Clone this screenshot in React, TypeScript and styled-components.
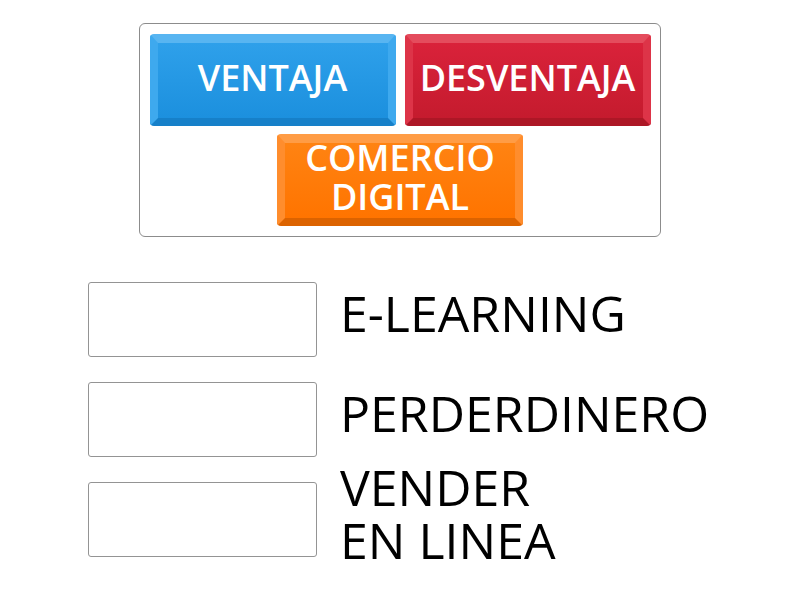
import React from "react";
import styled, { createGlobalStyle } from "styled-components";

const Global = createGlobalStyle`
  html, body { margin: 0; padding: 0; background: #ffffff; }
  body { font-family: "Open Sans", "Liberation Sans", sans-serif; }
`;

type Tone = "blue" | "red" | "orange";

const palette: Record<Tone, { top: string; side: string; bottom: string; faceA: string; faceB: string }> = {
  blue: { top: "#58b5f1", side: "#3ea9ee", bottom: "#1680c9", faceA: "#2ea0ea", faceB: "#1c90de" },
  red: { top: "#e44c5d", side: "#dd3448", bottom: "#ad1726", faceA: "#d9223a", faceB: "#c51b2e" },
  orange: { top: "#ff9c45", side: "#ff8d2d", bottom: "#dc6300", faceA: "#ff8312", faceB: "#ff7400" },
};

const Page = styled.div`
  width: 800px;
  height: 600px;
  display: flex;
  flex-direction: column;
  align-items: center;
  box-sizing: border-box;
  padding-top: 23px;
`;

const Bank = styled.div`
  box-sizing: border-box;
  width: 522px;
  border: 1px solid #8c8c8c;
  border-radius: 6px;
  padding: 10px 9px;
  display: flex;
  flex-wrap: wrap;
  justify-content: center;
  gap: 8px 9px;
`;

const Tile = styled.div<{ $tone: Tone }>`
  box-sizing: border-box;
  width: 246px;
  height: 92px;
  border-radius: 4px;
  border-style: solid;
  border-width: 9px 8px 8px 8px;
  border-top-color: ${(p) => palette[p.$tone].top};
  border-left-color: ${(p) => palette[p.$tone].side};
  border-right-color: ${(p) => palette[p.$tone].side};
  border-bottom-color: ${(p) => palette[p.$tone].bottom};
  background: linear-gradient(${(p) => palette[p.$tone].faceA}, ${(p) => palette[p.$tone].faceB});
  display: flex;
  align-items: center;
  justify-content: center;
  text-align: center;
  color: #ffffff;
  font-family: "Open Sans", "Liberation Sans", sans-serif;
  font-weight: 600;
  font-size: 36px;
  line-height: 39px;
  padding-bottom: 7px;
`;

const List = styled.div`
  width: 800px;
  box-sizing: border-box;
  padding-left: 88px;
  margin-top: 45px;
  display: flex;
  flex-direction: column;
  gap: 25px;
`;

const Row = styled.div`
  display: flex;
  align-items: center;
  gap: 23px;
  height: 75px;
`;

const Slot = styled.div`
  box-sizing: border-box;
  width: 229px;
  height: 75px;
  flex: none;
  border: 1px solid #949494;
  border-radius: 3px;
  background: #ffffff;
`;

const Label = styled.div`
  font-family: "Open Sans", "Liberation Sans", sans-serif;
  font-weight: 400;
  font-size: 50px;
  line-height: 53px;
  color: #000000;
  margin-bottom: 12px;
  white-space: nowrap;
`;

const tiles: { text: React.ReactNode; tone: Tone }[] = [
  { text: "VENTAJA", tone: "blue" },
  { text: "DESVENTAJA", tone: "red" },
  { text: <>COMERCIO<br />DIGITAL</>, tone: "orange" },
];

const rows: React.ReactNode[] = [
  "E-LEARNING",
  "PERDERDINERO",
  <>VENDER<br />EN LINEA</>,
];

export default function App() {
  return (
    <>
      <Global />
      <Page>
        <Bank>
          {tiles.map((t, i) => (
            <Tile key={i} $tone={t.tone}>{t.text}</Tile>
          ))}
        </Bank>
        <List>
          {rows.map((r, i) => (
            <Row key={i}>
              <Slot />
              <Label>{r}</Label>
            </Row>
          ))}
        </List>
      </Page>
    </>
  );
}
